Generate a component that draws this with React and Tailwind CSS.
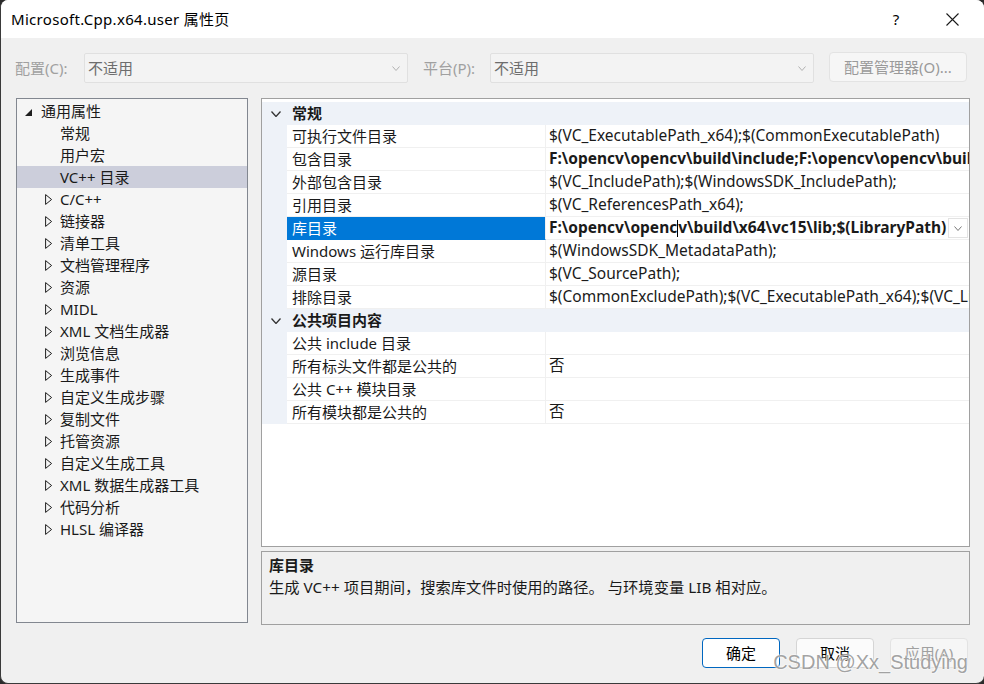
import React from "react";

const FONT = { fontFamily: '"Noto Sans", "Noto Sans CJK SC", sans-serif' };

function Chevron({ w = 9, h = 5, color = "#444", sw = 1.2 }) {
  return (
    <svg width={w} height={h} viewBox={`0 0 ${w} ${h}`} fill="none">
      <path d={`M0.5 0.5 L${w / 2} ${h - 0.5} L${w - 0.5} 0.5`} stroke={color} strokeWidth={sw} />
    </svg>
  );
}

const tree = [
  { label: "通用属性", kind: "expanded" },
  { label: "常规", kind: "child" },
  { label: "用户宏", kind: "child" },
  { label: "VC++ 目录", kind: "child", selected: true },
  { label: "C/C++", kind: "collapsed" },
  { label: "链接器", kind: "collapsed" },
  { label: "清单工具", kind: "collapsed" },
  { label: "文档管理程序", kind: "collapsed" },
  { label: "资源", kind: "collapsed" },
  { label: "MIDL", kind: "collapsed" },
  { label: "XML 文档生成器", kind: "collapsed" },
  { label: "浏览信息", kind: "collapsed" },
  { label: "生成事件", kind: "collapsed" },
  { label: "自定义生成步骤", kind: "collapsed" },
  { label: "复制文件", kind: "collapsed" },
  { label: "托管资源", kind: "collapsed" },
  { label: "自定义生成工具", kind: "collapsed" },
  { label: "XML 数据生成器工具", kind: "collapsed" },
  { label: "代码分析", kind: "collapsed" },
  { label: "HLSL 编译器", kind: "collapsed" },
];

function TreeRow({ item }) {
  const bg = item.selected ? "bg-[#cccedb]" : "";
  if (item.kind === "expanded") {
    return (
      <div className={`h-[22px] flex items-center pl-[8px] ${bg}`}>
        <div className="w-[16px] flex items-center pt-[2px]">
          <svg width="7" height="7" viewBox="0 0 7 7">
            <polygon points="7,0 7,7 0,7" fill="#1e1e1e" />
          </svg>
        </div>
        <span>{item.label}</span>
      </div>
    );
  }
  if (item.kind === "collapsed") {
    return (
      <div className={`h-[22px] flex items-center pl-[28px] ${bg}`}>
        <div className="w-[15px] flex items-center">
          <svg width="8" height="11" viewBox="0 0 8 11" fill="none">
            <polygon points="0.6,0.6 6.6,5.5 0.6,10.4" stroke="#1e1e1e" strokeWidth="1" />
          </svg>
        </div>
        <span>{item.label}</span>
      </div>
    );
  }
  return (
    <div className={`h-[22px] flex items-center pl-[43px] ${bg}`}>
      <span>{item.label}</span>
    </div>
  );
}

const sections = [
  {
    title: "常规",
    rows: [
      { name: "可执行文件目录", value: "$(VC_ExecutablePath_x64);$(CommonExecutablePath)" },
      { name: "包含目录", value: "F:\\opencv\\opencv\\build\\include;F:\\opencv\\opencv\\build\\include\\opencv2;$(IncludePath)", bold: true },
      { name: "外部包含目录", value: "$(VC_IncludePath);$(WindowsSDK_IncludePath);" },
      { name: "引用目录", value: "$(VC_ReferencesPath_x64);" },
      { name: "库目录", value: "", bold: true, selected: true },
      { name: "Windows 运行库目录", value: "$(WindowsSDK_MetadataPath);" },
      { name: "源目录", value: "$(VC_SourcePath);" },
      { name: "排除目录", value: "$(CommonExcludePath);$(VC_ExecutablePath_x64);$(VC_LibraryPath_x64)" },
    ],
  },
  {
    title: "公共项目内容",
    rows: [
      { name: "公共 include 目录", value: "" },
      { name: "所有标头文件都是公共的", value: "否" },
      { name: "公共 C++ 模块目录", value: "" },
      { name: "所有模块都是公共的", value: "否" },
    ],
  },
];

function PropRow({ row }) {
  return (
    <div className="flex h-[23px]">
      <div className="w-[25px] shrink-0 bg-[#eef2f8]" />
      <div
        className={`w-[259px] shrink-0 flex items-center pl-[5px] border-r border-b border-[#f0f0f0] ${
          row.selected ? "bg-[#0078d7] text-white border-b-[#0078d7]" : ""
        }`}
      >
        {row.name}
      </div>
      <div className="flex-1 min-w-0 flex items-center pl-[3px] border-b border-[#f0f0f0] overflow-hidden whitespace-nowrap relative text-[15.5px]">
        {row.selected ? (
          <>
            <span className="font-bold">
              F:\opencv\openc
              <span className="inline-block w-px h-[17px] bg-black align-middle -mt-[2px]" />
              v\build\x64\vc15\lib;$(LibraryPath)
            </span>
            <div className="absolute right-[1px] top-[1px] w-[20px] h-[20px] bg-white border border-[#e3e3e3] flex items-center justify-center">
              <Chevron w={8} h={5} color="#777" sw={1} />
            </div>
          </>
        ) : (
          <span className={row.bold ? "font-bold" : ""}>{row.value}</span>
        )}
      </div>
    </div>
  );
}

export default function App() {
  return (
    <div className="w-[984px] h-[684px] bg-[#2b2b2b] text-[15px] text-[#1a1a1a]" style={FONT}>
      <div className="w-full h-full rounded-[8px] border border-[#3a3a3a] border-t-0 border-r-0 bg-[#f0f0f0] overflow-hidden flex flex-col relative">
        {/* Title bar */}
        <div className="h-[38px] bg-white flex items-center shrink-0">
          <div className="pl-[10px] flex-1 text-[15px] tracking-[0.3px] text-black">Microsoft.Cpp.x64.user 属性页</div>
          <div className="w-[56px] h-full flex items-center justify-center text-[15px] text-black">?</div>
          <div className="w-[56px] h-full flex items-center justify-center mr-[4px]">
            <svg width="13" height="13" viewBox="0 0 13 13" fill="none">
              <path d="M0.5 0.5 L12.5 12.5 M12.5 0.5 L0.5 12.5" stroke="#1a1a1a" strokeWidth="1.1" />
            </svg>
          </div>
        </div>

        {/* Config row */}
        <div className="flex items-center pt-[14px] h-[46px] shrink-0">
          <div className="w-[83px] pl-[14px] text-[#a0a0a0]">配置(C):</div>
          <div className="w-[324px] h-[30px] border border-[#e0e0e0] bg-[#f3f3f3] rounded-[2px] flex items-center pl-[3px] pr-[7px] text-[#6d6d6d]">
            <span className="flex-1">不适用</span>
            <Chevron w={8} h={5} color="#b0b0b0" sw={1} />
          </div>
          <div className="w-[82px] pl-[15px] text-[#a0a0a0]">平台(P):</div>
          <div className="w-[324px] h-[30px] border border-[#e0e0e0] bg-[#f3f3f3] rounded-[2px] flex items-center pl-[3px] pr-[7px] text-[#6d6d6d]">
            <span className="flex-1">不适用</span>
            <Chevron w={8} h={5} color="#b0b0b0" sw={1} />
          </div>
          <div className="ml-[15px] w-[138px] h-[30px] -mt-[2px] border border-[#e3e3e3] bg-[#f6f6f6] rounded-[4px] flex items-center justify-center text-[#9a9a9a]">
            配置管理器(O)...
          </div>
        </div>

        {/* Main area */}
        <div className="flex pt-[14px] pl-[15px] shrink-0">
          <div className="w-[232px] h-[525px] border border-[#828790] bg-[#f5f5f5] pt-[1px] overflow-hidden">
            {tree.map((t) => (
              <TreeRow key={t.label} item={t} />
            ))}
          </div>
          <div className="ml-[13px] w-[709px] flex flex-col">
            <div className="h-[449px] border border-[#a0a0a0] bg-white pt-[3px] overflow-hidden">
              {sections.map((s) => (
                <div key={s.title}>
                  <div className="h-[23px] flex items-center bg-[#eef2f8]">
                    <div className="w-[25px] flex items-center justify-center pl-[2px]">
                      <Chevron w={10} h={6} color="#333" sw={1.3} />
                    </div>
                    <span className="pl-[5px] font-bold">{s.title}</span>
                  </div>
                  {s.rows.map((r) => (
                    <PropRow key={r.name} row={r} />
                  ))}
                </div>
              ))}
            </div>
            <div className="mt-[4px] h-[74px] border border-[#a0a0a0] bg-[#f0f0f0] pl-[7px] pt-[2px] leading-[22px]">
              <div className="font-bold">库目录</div>
              <div className="text-[15.3px]">生成 VC++ 项目期间，搜索库文件时使用的路径。 与环境变量 LIB 相对应。</div>
            </div>
          </div>
        </div>

        {/* Buttons */}
        <div className="flex justify-end gap-[16px] pr-[16px] pt-[13px]">
          <div className="w-[78px] h-[30px] bg-white border border-[#0067c0] rounded-[4px] flex items-center justify-center text-black">
            确定
          </div>
          <div className="w-[78px] h-[30px] bg-[#fbfbfb] border border-[#d5d5d5] rounded-[4px] flex items-center justify-center text-black">
            取消
          </div>
          <div className="w-[78px] h-[30px] bg-[#f6f6f6] border border-[#e3e3e3] rounded-[4px] flex items-center justify-center text-[#a0a0a0]">
            应用(A)
          </div>
        </div>

        {/* Watermark */}
        <div
          className="absolute right-[16px] bottom-[6px] text-[20px] text-[#8a8a8a]/80"
          style={{ fontFamily: '"Liberation Sans", sans-serif', textShadow: "0 0 2px #fff, 0 0 2px #fff" }}
        >
          CSDN @Xx_Studying
        </div>
      </div>
    </div>
  );
}
